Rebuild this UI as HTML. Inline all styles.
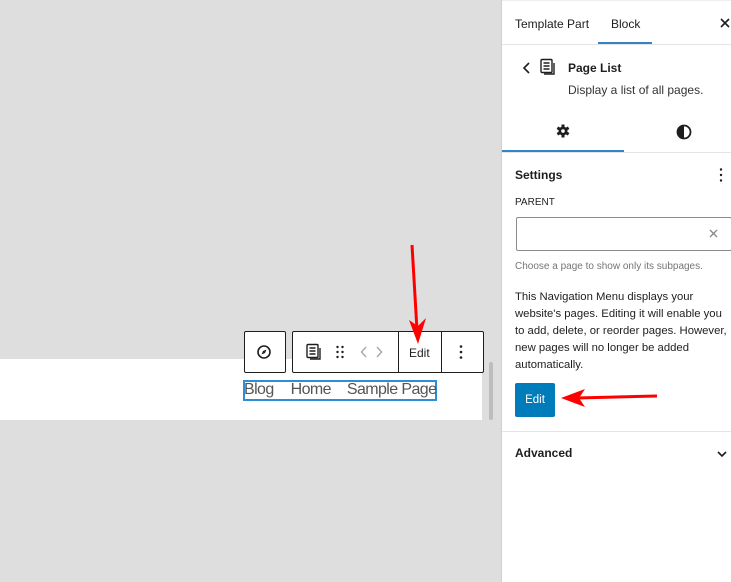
<!DOCTYPE html>
<html><head><style>
*{margin:0;padding:0;box-sizing:border-box}
body{width:731px;height:582px;position:relative;overflow:hidden;background:#dedede;font-family:"Liberation Sans",sans-serif;color:#1e1e1e}
.a{position:absolute;white-space:nowrap}
.sb{position:absolute;left:501px;top:0;width:230px;height:582px;background:#fff;border-left:1px solid #d0d0d0}
.hr{position:absolute;height:1px;background:#e4e4e4}
.box{position:absolute;border:1px solid #1e1e1e;border-radius:2px;background:#fff}
</style></head><body>
<div class="a" style="left:0;top:359px;width:482px;height:61px;background:#fff"></div>
<div class="a" style="left:489px;top:362px;width:4px;height:58px;background:#bdbdbd;border-radius:2px"></div>
<div class="box" style="left:244px;top:331px;width:42px;height:42px"></div>
<svg class="a" style="left:256px;top:344px" width="16" height="16" viewBox="0 0 16 16"><circle cx="8" cy="8" r="6" fill="none" stroke="#1e1e1e" stroke-width="1.6"/><path d="M10.5 5.5 L9 9 L5.5 10.5 L7 7Z" fill="#1e1e1e"/></svg>
<div class="box" style="left:292px;top:331px;width:192px;height:42px"></div>
<div class="a" style="left:398px;top:332px;width:1px;height:40px;background:#1e1e1e"></div>
<div class="a" style="left:441px;top:332px;width:1px;height:40px;background:#1e1e1e"></div>
<svg class="a" style="left:305px;top:343px" width="18" height="18" viewBox="0 0 18 18"><rect x="2" y="1.5" width="11" height="13" rx="1" fill="none" stroke="#1e1e1e" stroke-width="1.4"/><path d="M4.5 5h6M4.5 8h6M4.5 11h6M15 5v11H5" fill="none" stroke="#1e1e1e" stroke-width="1.4"/></svg>
<svg class="a" style="left:335px;top:345px" width="10" height="14"><g fill="#1e1e1e"><circle cx="2.5" cy="2" r="1.2"/><circle cx="7.5" cy="2" r="1.2"/><circle cx="2.5" cy="7" r="1.2"/><circle cx="7.5" cy="7" r="1.2"/><circle cx="2.5" cy="12" r="1.2"/><circle cx="7.5" cy="12" r="1.2"/></g></svg>
<svg class="a" style="left:360px;top:345px" width="24" height="14"><path d="M6 2L1.5 7 6 12M17 2l4.5 5L17 12" fill="none" stroke="#aaa" stroke-width="1.5"/></svg>
<div class="a" style="left:409px;top:346px;font-size:12px">Edit</div>
<svg class="a" style="left:458px;top:344px" width="6" height="16"><g fill="#1e1e1e"><circle cx="3" cy="2.5" r="1.3"/><circle cx="3" cy="8" r="1.3"/><circle cx="3" cy="13.5" r="1.3"/></g></svg>
<div class="a" style="left:243px;top:380px;width:194px;height:21px;border:2px solid #2b8fd6"></div>
<div class="a" style="left:244px;top:381px;font-size:16px;color:#555;letter-spacing:-0.6px">Blog<span style="margin-left:17px">Home</span><span style="margin-left:16px">Sample Page</span></div>
<svg class="a" style="left:400px;top:240px" width="30" height="110"><path d="M12 5 L17 90" stroke="#f00" stroke-width="3"/><path d="M9 80 L18 104 L26 78 L18 86Z" fill="#f00"/></svg>

<div class="sb">
<div class="hr" style="left:0;top:0;width:230px;background:#eee"></div>
<div class="a" style="left:13px;top:17px;font-size:12px">Template Part</div>
<div class="a" style="left:109px;top:17px;font-size:12px">Block</div>
<svg class="a" style="left:218px;top:18px" width="10" height="10"><path d="M1 1l8 8M9 1L1 9" stroke="#1e1e1e" stroke-width="1.6"/></svg>
<div class="hr" style="left:0;top:44px;width:230px"></div>
<div class="a" style="left:96px;top:42px;width:54px;height:2px;background:#3582c4"></div>
<svg class="a" style="left:20px;top:61px" width="10" height="14"><path d="M7 2L2 7l5 5" fill="none" stroke="#1e1e1e" stroke-width="1.6"/></svg>
<svg class="a" style="left:37px;top:58px" width="18" height="18" viewBox="0 0 18 18"><rect x="2" y="1.5" width="11" height="13" rx="1" fill="none" stroke="#1e1e1e" stroke-width="1.4"/><path d="M4.5 5h6M4.5 8h6M4.5 11h6M15 5v11H5" fill="none" stroke="#1e1e1e" stroke-width="1.4"/></svg>
<div class="a" style="left:66px;top:61px;font-size:12px;font-weight:bold">Page List</div>
<div class="a" style="left:66px;top:83px;font-size:12px;color:#333">Display a list of all pages.</div>
<svg class="a" style="left:54px;top:124px" width="14" height="14" viewBox="0 0 14 14"><g fill="#1e1e1e"><circle cx="7" cy="7" r="4.5"/><rect x="5.5" y="0.5" width="3" height="13"/><rect x="5.5" y="0.5" width="3" height="13" transform="rotate(60 7 7)"/><rect x="5.5" y="0.5" width="3" height="13" transform="rotate(120 7 7)"/></g><circle cx="7" cy="7" r="1.8" fill="#fff"/></svg>
<svg class="a" style="left:174px;top:124px" width="16" height="16"><circle cx="8" cy="8" r="6.5" fill="none" stroke="#1e1e1e" stroke-width="1.8"/><path d="M8 1.5a6.5 6.5 0 0 0 0 13Z" fill="#1e1e1e"/></svg>
<div class="hr" style="left:0;top:152px;width:230px"></div>
<div class="a" style="left:0;top:150px;width:122px;height:2px;background:#3582c4"></div>
<div class="a" style="left:13px;top:168px;font-size:12px;font-weight:bold">Settings</div>
<svg class="a" style="left:216px;top:167px" width="6" height="16"><g fill="#1e1e1e"><circle cx="3" cy="2.5" r="1.2"/><circle cx="3" cy="8" r="1.2"/><circle cx="3" cy="13.5" r="1.2"/></g></svg>
<div class="a" style="left:13px;top:197px;font-size:10px">PARENT</div>
<div class="a" style="left:14px;top:217px;width:216px;height:34px;border:1px solid #8c8c8c;border-radius:2px"></div>
<svg class="a" style="left:207px;top:229px" width="9" height="9"><path d="M1 1l7 7M8 1L1 8" stroke="#888" stroke-width="1.3"/></svg>
<div class="a" style="left:13px;top:261px;font-size:10px;color:#757575">Choose a page to show only its subpages.</div>
<div class="a" style="left:13px;top:289px;font-size:11.3px;line-height:17px;color:#1e1e1e">This Navigation Menu displays your<br>website's pages. Editing it will enable you<br>to add, delete, or reorder pages. However,<br>new pages will no longer be added<br>automatically.</div>
<div class="a" style="left:13px;top:383px;width:40px;height:34px;background:#007cba;border-radius:2px;color:#fff;font-size:11.5px;text-align:center;line-height:34px">Edit</div>
<svg class="a" style="left:55px;top:385px" width="105" height="26"><path d="M100 11 L20 13" stroke="#f00" stroke-width="3"/><path d="M4 13 L28 4 L22 13 L28 22Z" fill="#f00"/></svg>
<div class="hr" style="left:0;top:431px;width:230px"></div>
<div class="a" style="left:13px;top:446px;font-size:12px;font-weight:bold">Advanced</div>
<svg class="a" style="left:214px;top:449px" width="12" height="10"><path d="M2 3l4 4 4-4" fill="none" stroke="#1e1e1e" stroke-width="1.6"/></svg>
</div>
</body></html>
